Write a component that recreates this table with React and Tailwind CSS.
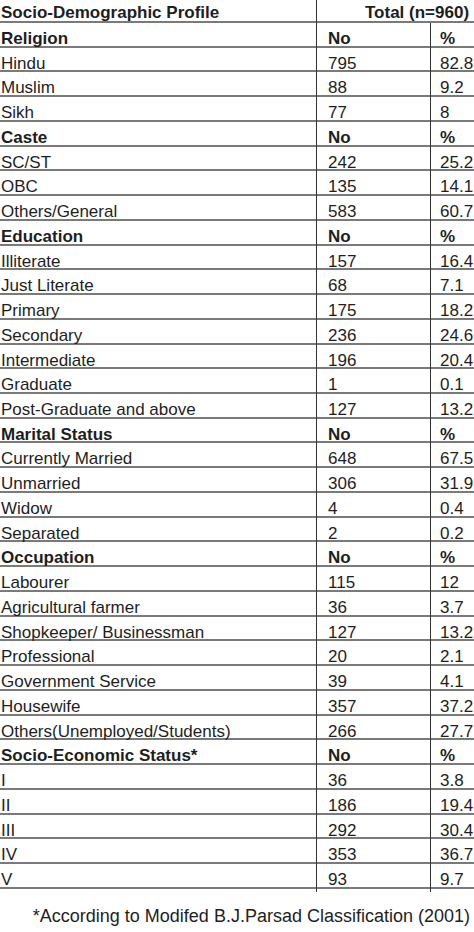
const sections = [
  {
    title: 'Religion',
    rows: [
      ['Hindu', '795', '82.8'],
      ['Muslim', '88', '9.2'],
      ['Sikh', '77', '8'],
    ],
  },
  {
    title: 'Caste',
    rows: [
      ['SC/ST', '242', '25.2'],
      ['OBC', '135', '14.1'],
      ['Others/General', '583', '60.7'],
    ],
  },
  {
    title: 'Education',
    rows: [
      ['Illiterate', '157', '16.4'],
      ['Just Literate', '68', '7.1'],
      ['Primary', '175', '18.2'],
      ['Secondary', '236', '24.6'],
      ['Intermediate', '196', '20.4'],
      ['Graduate', '1', '0.1'],
      ['Post-Graduate and above', '127', '13.2'],
    ],
  },
  {
    title: 'Marital Status',
    rows: [
      ['Currently Married', '648', '67.5'],
      ['Unmarried', '306', '31.9'],
      ['Widow', '4', '0.4'],
      ['Separated', '2', '0.2'],
    ],
  },
  {
    title: 'Occupation',
    rows: [
      ['Labourer', '115', '12'],
      ['Agricultural farmer', '36', '3.7'],
      ['Shopkeeper/ Businessman', '127', '13.2'],
      ['Professional', '20', '2.1'],
      ['Government Service', '39', '4.1'],
      ['Housewife', '357', '37.2'],
      ['Others(Unemployed/Students)', '266', '27.7'],
    ],
  },
  {
    title: 'Socio-Economic Status*',
    rows: [
      ['I', '36', '3.8'],
      ['II', '186', '19.4'],
      ['III', '292', '30.4'],
      ['IV', '353', '36.7'],
      ['V', '93', '9.7'],
    ],
  },
];

function Row({ cells, bold }) {
  const weight = bold ? 'font-bold' : 'font-normal';
  return (
    <div className={`grid grid-cols-[317px_114px_1fr] h-[24.74px] border-b-2 border-[#7a7a7a] ${weight}`}>
      <div className="flex items-center pl-[1px] pt-[3px] border-r border-[#333] whitespace-nowrap overflow-hidden">
        {cells[0]}
      </div>
      <div className="flex items-center pl-[11px] pt-[3px] border-r border-[#333]">{cells[1]}</div>
      <div className="flex items-center pl-[9px] pt-[3px] whitespace-nowrap overflow-hidden">{cells[2]}</div>
    </div>
  );
}

export default function App() {
  return (
    <div
      className="w-[474px] h-[932px] bg-white text-[#1e1e1e] text-[17px] overflow-hidden"
      style={{ fontFamily: '"Liberation Sans", Arial, sans-serif' }}
    >
      <div className="grid grid-cols-[317px_1fr] h-[23px] border-b-2 border-[#7a7a7a] font-bold">
        <div className="flex items-center pl-[1px] border-r border-[#333]">Socio-Demographic Profile</div>
        <div className="flex items-center pl-[48px] whitespace-nowrap">Total (n=960)</div>
      </div>
      {sections.map((s) => (
        <div key={s.title}>
          <Row cells={[s.title, 'No', '%']} bold />
          {s.rows.map((r) => (
            <Row key={r[0]} cells={r} />
          ))}
        </div>
      ))}
      <div className="flex justify-end pr-[4px] pt-[14px] text-[18px]">
        *According to Modifed B.J.Parsad Classification (2001)
      </div>
    </div>
  );
}
